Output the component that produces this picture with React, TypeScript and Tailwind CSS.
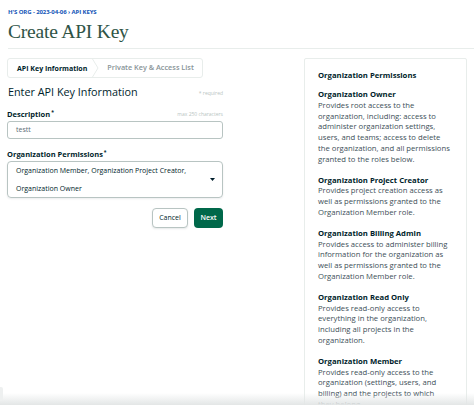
import React from 'react';

const permissions = [
  {
    name: 'Organization Owner',
    text: 'Provides root access to the organization, including: access to administer organization settings, users, and teams; access to delete the organization, and all permissions granted to the roles below.',
    width: 'max-w-none',
  },
  {
    name: 'Organization Project Creator',
    text: 'Provides project creation access as well as permissions granted to the Organization Member role.',
    width: 'max-w-none',
  },
  {
    name: 'Organization Billing Admin',
    text: 'Provides access to administer billing information for the organization as well as permissions granted to the Organization Member role.',
    width: 'max-w-none',
  },
  {
    name: 'Organization Read Only',
    text: 'Provides read-only access to everything in the organization, including all projects in the organization.',
    width: 'max-w-none',
  },
  {
    name: 'Organization Member',
    text: 'Provides read-only access to the organization (settings, users, and billing) and the projects to which they belong.',
    width: 'max-w-[128px]',
  },
];

const Field: React.FC<{ label: string; hint?: string; children: React.ReactNode }> = ({ label, hint, children }) => (
  <div>
    <div className="flex items-end justify-between h-[11px] mb-[3px]">
      <span className="text-[7.5px] font-bold text-[#001e2b] leading-none">
        {label}
        <sup className="text-[5px] ml-[1px]">*</sup>
      </span>
      {hint && <span className="text-[5px] text-[#b8c4c2] leading-none mb-[1px]">{hint}</span>}
    </div>
    {children}
  </div>
);

const App: React.FC = () => {
  return (
    <div className="relative w-[474px] h-[405px] overflow-hidden bg-white font-['Open_Sans',sans-serif] text-[#001e2b]">
      <div className="pl-[8px] pt-[8px]">
        <div className="text-[6px] font-bold text-[#1254b7] tracking-[-0.1px] leading-[8px]">
          H'S ORG - 2023-04-06 › API KEYS
        </div>
        <h1 className="mt-[4px] font-['Liberation_Serif',serif] text-[19.5px] leading-[24px] text-[#2f5446] tracking-[-0.2px]">
          Create API Key
        </h1>
      </div>
      <div className="ml-[8px] mt-[4px] h-px bg-[#e8edeb]" />

      <div className="flex pl-[7px] pr-[7px] pt-[9px]">
        <div className="w-[216px] shrink-0">
          <div className="flex items-center w-[196px] h-[20px] border border-[#e8edeb] rounded-[3px]">
            <span className="pl-[9px] pr-[5px] text-[7px] font-bold leading-none">API Key Information</span>
            <svg width="7" height="18" viewBox="0 0 7 18" className="shrink-0">
              <polyline points="0.5,0 6,9 0.5,18" fill="none" stroke="#e8edeb" strokeWidth="1" />
            </svg>
            <span className="pl-[8px] text-[7.3px] font-semibold text-[#889397] leading-none">Private Key &amp; Access List</span>
          </div>

          <div className="flex items-end justify-between mt-[7px] pl-px">
            <h2 className="text-[10.8px] leading-[14px] font-normal">Enter API Key Information</h2>
            <span className="text-[5px] text-[#b8c4c2] mb-[2px]">* required</span>
          </div>

          <div className="mt-[8px]">
            <Field label="Description" hint="max 250 characters">
              <div className="h-[18px] border border-[#b8c4c2] rounded-[3px] flex items-center pl-[8px] text-[7px] text-[#5c6c75]">
                testt
              </div>
            </Field>
          </div>

          <div className="mt-[8px]">
            <Field label="Organization Permissions">
              <div className="h-[37px] border border-[#b8c4c2] rounded-[4px] flex items-center pl-[8px] pr-[7px] shadow-[0_1px_2px_rgba(0,30,43,0.08)]">
                <div className="flex-1 text-[7px] leading-[18px] text-[#001e2b]">
                  Organization Member, Organization Project Creator,
                  <br />
                  Organization Owner
                </div>
                <svg width="5" height="3" viewBox="0 0 5 3" className="shrink-0">
                  <polygon points="0,0 5,0 2.5,3" fill="#001e2b" />
                </svg>
              </div>
            </Field>
          </div>

          <div className="flex justify-end gap-[6px] mt-[10px]">
            <button className="w-[36px] h-[20px] rounded-[4px] border border-[#b8c4c2] bg-white text-[7px] font-medium text-[#001e2b] shadow-[0_1px_2px_rgba(0,30,43,0.1)]">
              Cancel
            </button>
            <button className="w-[29px] h-[20px] rounded-[4px] bg-[#00684a] text-[7px] font-semibold text-white">
              Next
            </button>
          </div>
        </div>

        <div className="ml-auto w-[163px] shrink-0 border border-[#e8edeb] rounded-[2px] px-[13px] pt-[11px] pb-[20px]">
          <div className="text-[7.7px] font-bold leading-[10px] text-[#001e2b]">Organization Permissions</div>
          <div className="mt-[9px] flex flex-col gap-[10px]">
            {permissions.map((p) => (
              <div key={p.name} className="text-[7.7px] leading-[10.8px]">
                <div className="font-bold text-[#001e2b]">{p.name}</div>
                <div className={`text-[#3d4f58] ${p.width}`}>{p.text}</div>
              </div>
            ))}
          </div>
        </div>
      </div>

      <div className="absolute left-0 right-0 bottom-0 h-[12px] bg-gradient-to-b from-transparent to-[#e3e6e6]" />
      <div className="absolute left-0 bottom-[4px] w-[3px] h-[14px] bg-[#eef0f0] rounded-r-[2px]" />
    </div>
  );
};

export default App;
